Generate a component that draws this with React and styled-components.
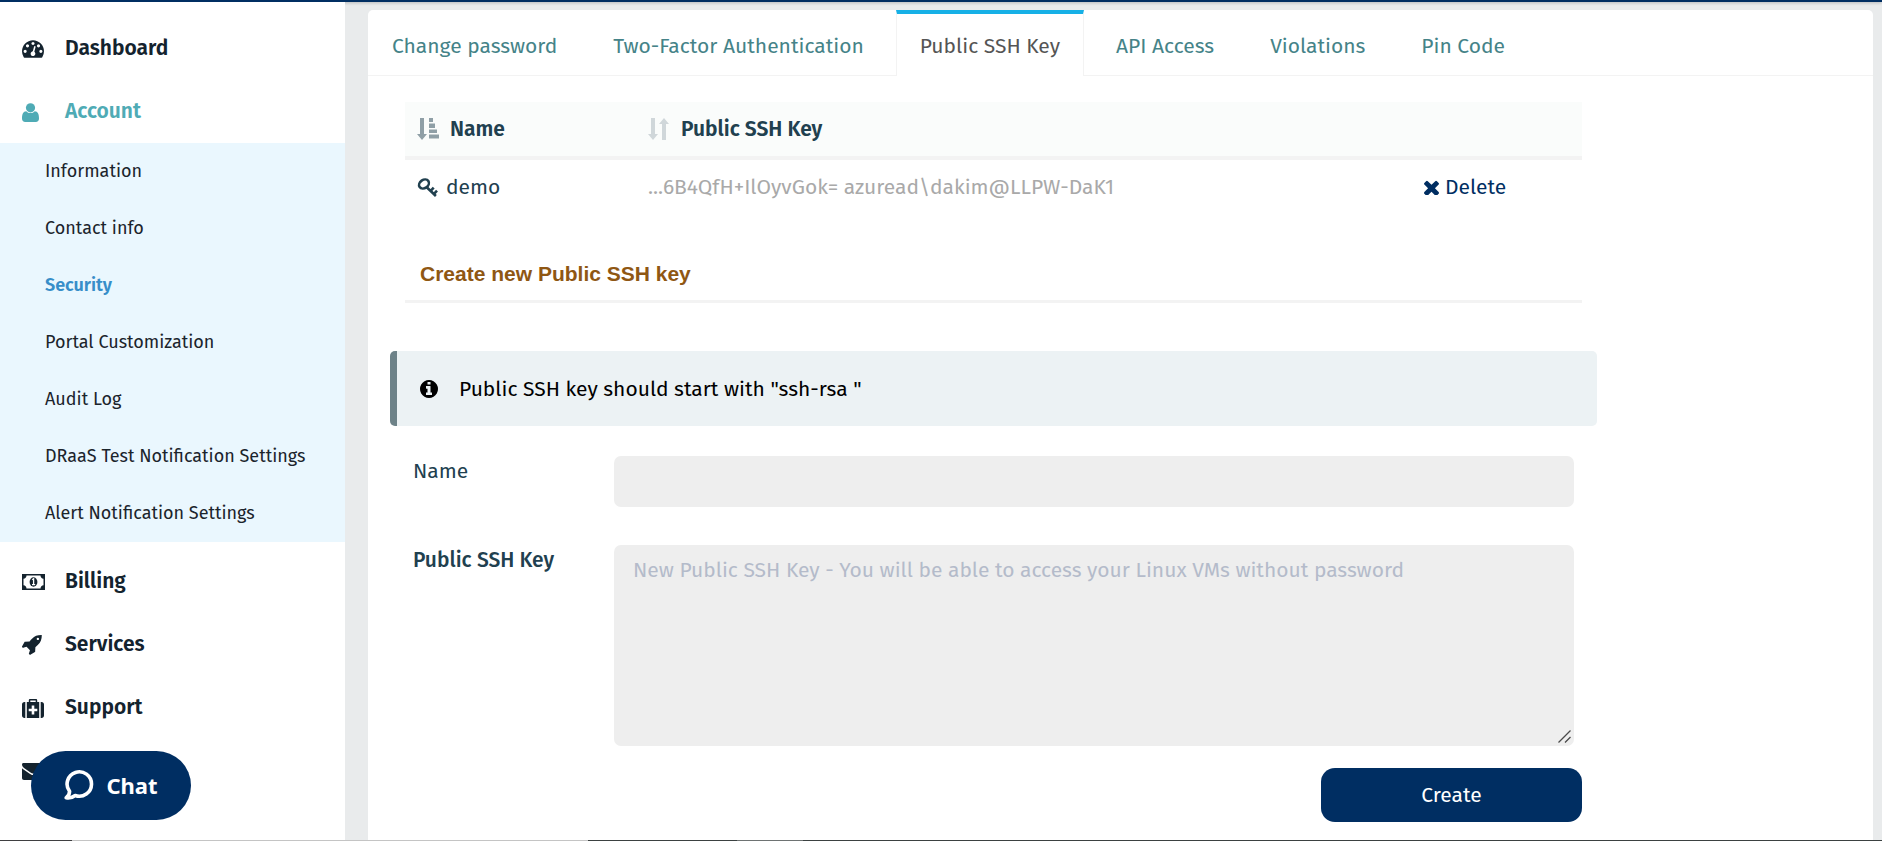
import React from 'react';
import styled, { createGlobalStyle, css } from 'styled-components';

const color = {
  navy: '#002e62',
  ink: '#14232e',
  text: '#21404f',
  teal: '#4fabb5',
  link: '#458388',
  line: '#f3f3f3',
};

const GlobalStyle = createGlobalStyle`
  *, *::before, *::after { box-sizing: border-box; }
  body {
    margin: 0;
    background: #e9ebec;
    color: ${color.text};
    font-family: "Fira Sans", "Noto Sans", sans-serif;
    font-size: 21px;
    line-height: 28px;
  }
  button, input, textarea { font: inherit; color: inherit; }
`;

/* ---------- page shell ---------- */

const Shell = styled.div`
  display: flex;
  flex-direction: column;
  height: 100vh;
  overflow: hidden;
`;

const TopBar = styled.div`
  flex: none;
  height: 2px;
  background: ${color.navy};
  box-shadow: 0 1px 3px rgba(0, 0, 0, 0.25);
`;

const Body = styled.div`
  flex: 1;
  min-height: 0;
  display: flex;
`;

const BottomEdge = styled.div`
  flex: none;
  height: 1px;
  background: linear-gradient(
    to right,
    #3f3f41 0 72px,
    #c4c4c4 72px 588px,
    #3b4141 588px 737px,
    #6e7373 737px 803px,
    #3b4141 803px
  );
`;

/* ---------- sidebar ---------- */

const Sidebar = styled.nav`
  flex: none;
  width: 345px;
  padding-top: 15px;
  background: #fff;
  overflow: hidden;
`;

const NavList = styled.ul`
  margin: 0;
  padding: 0;
  list-style: none;
`;

const NavLink = styled.a`
  display: flex;
  align-items: center;
  height: 63px;
  padding: 0 0 1px 22px;
  font-weight: 600;
  color: ${(p) => (p.$active ? color.teal : color.ink)};
  text-decoration: none;
`;

const NavIcon = styled.span`
  display: flex;
  width: 43px;
  padding-top: 2px;
`;

const SubList = styled(NavList)`
  margin-bottom: 8px;
  background: #eaf7fe;
`;

const SubLink = styled.a`
  display: flex;
  align-items: center;
  height: 57px;
  padding: 0 0 2px 45px;
  font-size: 18px;
  color: #1b242c;
  text-decoration: none;
  ${(p) =>
    p.$active &&
    css`
      color: #378ec9;
      font-weight: 600;
    `}
`;

const ChatButton = styled.button`
  position: fixed;
  left: 31px;
  bottom: 21px;
  display: flex;
  align-items: center;
  justify-content: center;
  gap: 12px;
  width: 160px;
  height: 69px;
  padding: 0 0 2px;
  border: 0;
  border-radius: 35px;
  background: ${color.navy};
  color: #fff;
  font-family: "Noto Sans", sans-serif;
  font-size: 22px;
  font-weight: 700;
`;

/* ---------- main card ---------- */

const Main = styled.main`
  flex: 1;
  min-width: 0;
  padding: 8px 9px 0 23px;
`;

const Card = styled.section`
  min-height: 100%;
  background: #fff;
  border-radius: 5px 5px 0 0;
`;

const Tabs = styled.div`
  display: flex;
  gap: 8px;
  height: 66px;
  border-bottom: 1px solid ${color.line};
`;

const Tab = styled.a`
  display: flex;
  align-items: center;
  height: 66px;
  padding: 2px 23px 0;
  border: 1px solid transparent;
  border-top: 4px solid transparent;
  border-bottom: 0;
  color: ${color.link};
  text-decoration: none;
  white-space: nowrap;
  ${(p) =>
    p.$active &&
    css`
      background: #fff;
      border-color: #16b0e6 ${color.line} transparent;
      color: #555;
    `}
`;

const Content = styled.div`
  max-width: 1207px;
  margin: 26px 22px 0;
`;

const Inset = styled.div`
  padding: 0 15px;
`;

/* ---------- key table ---------- */

const KeyTable = styled.table`
  width: 100%;
  table-layout: fixed;
  border-collapse: separate;
  border-spacing: 0;
  text-align: left;
`;

const HeadCell = styled.th`
  width: ${(p) => p.$width || 'auto'};
  height: 58px;
  padding: 0 12px;
  background: #fafcfb;
  border-bottom: 4px solid ${color.line};
  font-weight: 600;
`;

const Cell = styled.td`
  height: 54px;
  padding: 0 12px;
  color: ${(p) => (p.$muted ? '#a9a9a9' : color.text)};
  white-space: nowrap;
`;

const SortButton = styled.button`
  display: flex;
  align-items: center;
  gap: 11px;
  padding: 0;
  border: 0;
  background: none;
  font-weight: 600;
`;

const KeyName = styled.span`
  display: flex;
  align-items: center;
  gap: 8px;
`;

const DeleteButton = styled.button`
  display: flex;
  align-items: center;
  gap: 6px;
  padding: 0;
  border: 0;
  background: none;
  color: ${color.navy};
`;

/* ---------- form ---------- */

const FormTitle = styled.h2`
  margin: 46px 0 0;
  padding: 0 15px 12px;
  border-bottom: 3px solid ${color.line};
  color: #8f5713;
  font-family: Arial, "Liberation Sans", sans-serif;
  font-size: 21px;
  font-weight: 700;
  line-height: 28px;
`;

const Notice = styled.div`
  display: flex;
  align-items: center;
  gap: 21px;
  height: 75px;
  margin: 48px 0 30px;
  padding-left: 23px;
  border-left: 7px solid #6d8288;
  border-radius: 5px;
  background: #ecf2f4;
  color: #000;
`;

const Field = styled.div`
  display: grid;
  grid-template-columns: 201px 1fr;
  align-items: start;
  margin-bottom: ${(p) => p.$after}px;
  padding: 0 23px;
`;

const Label = styled.label`
  padding-top: 1px;
  font-weight: ${(p) => (p.$strong ? 500 : 400)};
`;

const control = css`
  width: 100%;
  border: 0;
  border-radius: 7px;
  background: #eee;
  outline: 0;
`;

const TextInput = styled.input`
  ${control}
  height: 51px;
  padding: 0 19px;
`;

const AreaWrap = styled.div`
  position: relative;
`;

const TextArea = styled.textarea`
  ${control}
  display: block;
  height: 201px;
  padding: 11px 19px;
  resize: vertical;
  &::placeholder { color: #b4bbca; opacity: 1; }
  &::-webkit-resizer { display: none; }
`;

const Grip = styled.svg`
  position: absolute;
  right: 3px;
  bottom: 3px;
  pointer-events: none;
`;

const Actions = styled.div`
  display: flex;
  justify-content: flex-end;
  padding-right: 15px;
`;

const CreateButton = styled.button`
  width: 261px;
  height: 54px;
  border: 0;
  border-radius: 14px;
  background: ${color.navy};
  color: #fff;
`;

/* ---------- icons ---------- */

const DashboardIcon = () => (
  <svg width="22" height="18" viewBox="0 256 1792 1408" fill="currentColor">
    <path d="M384 1152q0-53-37.5-90.5t-90.5-37.5-90.5 37.5-37.5 90.5 37.5 90.5 90.5 37.5 90.5-37.5 37.5-90.5zm192-448q0-53-37.5-90.5t-90.5-37.5-90.5 37.5-37.5 90.5 37.5 90.5 90.5 37.5 90.5-37.5 37.5-90.5zm428 481l101-382q6-26-7.5-48.5t-38.5-29.5-48 6.5-30 39.5l-101 382q-60 5-107 43.5t-63 98.5q-20 77 20 146t117 89 146-20 89-117q16-60-6-117t-72-91zm660-33q0-53-37.5-90.5t-90.5-37.5-90.5 37.5-37.5 90.5 37.5 90.5 90.5 37.5 90.5-37.5 37.5-90.5zm-640-640q0-53-37.5-90.5t-90.5-37.5-90.5 37.5-37.5 90.5 37.5 90.5 90.5 37.5 90.5-37.5 37.5-90.5zm448 192q0-53-37.5-90.5t-90.5-37.5-90.5 37.5-37.5 90.5 37.5 90.5 90.5 37.5 90.5-37.5 37.5-90.5zm320 448q0 261-141 483-19 29-54 29h-1402q-35 0-54-29-141-221-141-483 0-182 71-348t191-286 286-191 348-71 348 71 286 191 191 286 71 348z" />
  </svg>
);

const UserIcon = () => (
  <svg width="17" height="19" viewBox="0 0 17 19" fill="currentColor">
    <circle cx="8.5" cy="4.8" r="4.6" />
    <path d="M4.2 8.2C1.2 8.4 0 11 0 15.4 0 17.500 1.300 19 3.200 19H13.800C15.700 19 17 17.500 17 15.400 17 11 15.800 8.400 12.800 8.200 11.600 9.400 10.200 10.100 8.500 10.100 6.800 10.100 5.400 9.400 4.200 8.200Z" />
  </svg>
);

const BillingIcon = () => (
  <svg width="23" height="16" viewBox="0 0 23 16" fill="currentColor">
    <path fillRule="evenodd" d="M0 0H23V16H0ZM4.500 1.500C4.500 3.300 3.200 4.700 1.500 4.700V11.300C3.200 11.300 4.500 12.700 4.500 14.500H18.500C18.500 12.700 19.800 11.300 21.500 11.300V4.700C19.800 4.700 18.500 3.300 18.500 1.500Z" />
    <ellipse cx="11.500" cy="8" rx="3.900" ry="4.700" />
    <path d="M10.200 5.800L11.600 4.800V10.500M10 10.700H13.200" fill="none" stroke="#fff" strokeWidth="1.300" />
  </svg>
);

const RocketIcon = () => (
  <svg width="20" height="20" viewBox="60 128 1604 1640" fill="currentColor">
    <path d="M1440 448q0-40-28-68t-68-28-68 28-28 68 28 68 68 28 68-28 28-68zm224-288q0 249-75.500 430.500t-253.500 360.500q-81 80-195 176l-20 379q-2 16-16 26l-384 224q-7 4-16 4-12 0-23-9l-64-64q-13-14-8-32l85-276-281-281-276 85q-3 1-9 1-14 0-23-9l-64-64q-17-19-5-39l224-384q10-14 26-16l379-20q96-114 176-195 188-187 358-258t431-71q14 0 24 9.500t10 22.500z" />
  </svg>
);

const SupportIcon = () => (
  <svg width="22" height="19" viewBox="0 0 22 19" fill="currentColor">
    <path d="M3.300 3V19H2.500C1 19 0 18 0 16.500V5.500C0 4 1 3 2.500 3ZM18.700 3H19.500C21 3 22 4 22 5.500V16.500C22 18 21 19 19.500 19H18.700Z" />
    <path fillRule="evenodd" d="M4.800 3H6.800V1.300C6.800.500 7.400 0 8.200 0H13.800C14.600 0 15.200.500 15.200 1.300V3H17.200V19H4.800ZM8.300 3H13.700V1.500H8.300ZM9.700 6.500V9.700H6.700V12.300H9.700V15.500H12.300V12.300H15.300V9.700H12.300V6.500Z" />
  </svg>
);

const MailIcon = () => (
  <svg width="22" height="17" viewBox="0 0 22 17" fill="currentColor">
    <path d="M1.500 0H20.500C21.500 0 22 .700 22 1.600 22 3 21 4.200 20 5L13.500 9.500C12.500 10.200 11.800 10.600 11 10.600S9.500 10.200 8.500 9.500L2 5C1 4.200 0 3 0 1.600 0 .700.500 0 1.500 0Z" />
    <path d="M0 5.200C.400 5.600.800 6 1.200 6.200L7.700 10.800C8.900 11.600 9.900 12.100 11 12.100S13.100 11.600 14.300 10.800L20.800 6.200C21.200 6 21.600 5.600 22 5.200V15C22 16.200 21.200 17 20 17H2C.800 17 0 16.200 0 15Z" />
  </svg>
);

const SortAscIcon = () => (
  <svg width="22" height="22" viewBox="0 0 22 22" fill="#8f9fa6">
    <path d="M3 0H7V16H10L5 22 0 16H3Z" />
    <path d="M12 0H16V4H12ZM12 5.500H18V10H12ZM12 11.500H20V15H12ZM12 16.500H22V20.500H12Z" />
  </svg>
);

const SortIcon = () => (
  <svg width="22" height="22" viewBox="0 0 22 22" fill="#d0d7da">
    <path d="M3 0H7V16H10L5 22 0 16H3Z" />
    <path d="M14 22H18V6H21L16 0 11 6H14Z" />
  </svg>
);

const KeyIcon = () => (
  <svg width="21" height="19" viewBox="0 0 21 19" fill="none" stroke="currentColor" strokeWidth="2.600">
    <ellipse cx="7" cy="6" rx="5.300" ry="4.100" transform="rotate(-35 7 6)" />
    <path d="M9.200 8.700L18.900 18M13.700 12.900L16.700 9.700M17 15.800L20 12.600" />
  </svg>
);

const CloseIcon = () => (
  <svg width="15" height="15" viewBox="302 302 1188 1188" fill="currentColor">
    <path d="M1490 1322q0 40-28 68l-136 136q-28 28-68 28t-68-28l-294-294-294 294q-28 28-68 28t-68-28l-136-136q-28-28-28-68t28-68l294-294-294-294q-28-28-28-68t28-68l136-136q28-28 68-28t68 28l294 294 294-294q28-28 68-28t68 28l136 136q28 28 28 68t-28 68l-294 294 294 294q28 28 28 68z" />
  </svg>
);

const InfoIcon = () => (
  <svg width="18" height="18" viewBox="128 128 1536 1536" fill="currentColor">
    <path d="M1152 1376v-160q0-14-9-23t-23-9h-96v-512q0-14-9-23t-23-9h-320q-14 0-23 9t-9 23v160q0 14 9 23t23 9h96v320h-96q-14 0-23 9t-9 23v160q0 14 9 23t23 9h448q14 0 23-9t9-23zm-128-896v-160q0-14-9-23t-23-9h-192q-14 0-23 9t-9 23v160q0 14 9 23t23 9h192q14 0 23-9t9-23zm640 416q0 209-103 385.500t-279.500 279.500-385.500 103-385.500-103-279.500-279.500-103-385.500 103-385.500 279.500-279.500 385.500-103 385.500 103 279.500 279.500 103 385.500z" />
  </svg>
);

const ChatIcon = () => (
  <svg width="30" height="31" viewBox="0 0 30 31" fill="none" stroke="#fff" strokeWidth="3.600" strokeLinejoin="round">
    <path d="M5.600 22.400A12.200 12.200 0 1 1 11.200 26.500C8.500 28.600 5.200 29.300 2.200 28.800 4.500 27.200 5.500 25 5.600 22.400Z" />
  </svg>
);

/* ---------- data ---------- */

const accountPages = [
  'Information',
  'Contact info',
  'Security',
  'Portal Customization',
  'Audit Log',
  'DRaaS Test Notification Settings',
  'Alert Notification Settings',
];

const sections = [
  { name: 'Dashboard', Icon: DashboardIcon },
  { name: 'Account', Icon: UserIcon, pages: accountPages },
  { name: 'Billing', Icon: BillingIcon },
  { name: 'Services', Icon: RocketIcon },
  { name: 'Support', Icon: SupportIcon },
  { name: '', label: 'Messages', Icon: MailIcon },
];

const tabs = [
  'Change password',
  'Two-Factor Authentication',
  'Public SSH Key',
  'API Access',
  'Violations',
  'Pin Code',
];

export default function App() {
  return (
    <Shell>
      <GlobalStyle />
      <TopBar />
      <Body>
        <Sidebar>
          <NavList>
            {sections.map(({ name, label, Icon, pages }) => (
              <li key={name || label}>
                <NavLink href="#" $active={Boolean(pages)} aria-label={label}>
                  <NavIcon><Icon /></NavIcon>
                  {name}
                </NavLink>
                {pages && (
                  <SubList>
                    {pages.map((page) => (
                      <li key={page}>
                        <SubLink href="#" $active={page === 'Security'}>{page}</SubLink>
                      </li>
                    ))}
                  </SubList>
                )}
              </li>
            ))}
          </NavList>
        </Sidebar>

        <Main>
          <Card>
            <Tabs>
              {tabs.map((tab) => (
                <Tab key={tab} href="#" $active={tab === 'Public SSH Key'}>{tab}</Tab>
              ))}
            </Tabs>

            <Content>
              <Inset>
                <KeyTable>
                  <thead>
                    <tr>
                      <HeadCell $width="231px">
                        <SortButton type="button"><SortAscIcon />Name</SortButton>
                      </HeadCell>
                      <HeadCell>
                        <SortButton type="button"><SortIcon />Public SSH Key</SortButton>
                      </HeadCell>
                      <HeadCell $width="170px" />
                    </tr>
                  </thead>
                  <tbody>
                    <tr>
                      <Cell><KeyName><KeyIcon />demo</KeyName></Cell>
                      <Cell $muted>{'...6B4QfH+IlOyvGok= azuread\\dakim@LLPW-DaK1'}</Cell>
                      <Cell>
                        <DeleteButton type="button"><CloseIcon />Delete</DeleteButton>
                      </Cell>
                    </tr>
                  </tbody>
                </KeyTable>
                <FormTitle>Create new Public SSH key</FormTitle>
              </Inset>

              <Notice>
                <InfoIcon />
                <span>Public SSH key should start with "ssh-rsa "</span>
              </Notice>

              <form onSubmit={(e) => e.preventDefault()}>
                <Field $after={38}>
                  <Label htmlFor="key-name">Name</Label>
                  <TextInput id="key-name" type="text" />
                </Field>
                <Field $after={22}>
                  <Label htmlFor="key-value" $strong>Public SSH Key</Label>
                  <AreaWrap>
                    <TextArea
                      id="key-value"
                      placeholder="New Public SSH Key - You will be able to access your Linux VMs without password"
                    />
                    <Grip width="13" height="13" viewBox="0 0 13 13" stroke="#4a4a4a" strokeWidth="1.300" aria-hidden="true">
                      <path d="M.500 12.500L12.500 .500M7 12.500L12.500 7" />
                    </Grip>
                  </AreaWrap>
                </Field>
                <Actions>
                  <CreateButton type="submit">Create</CreateButton>
                </Actions>
              </form>
            </Content>
          </Card>
        </Main>
      </Body>
      <BottomEdge />
      <ChatButton type="button"><ChatIcon />Chat</ChatButton>
    </Shell>
  );
}
